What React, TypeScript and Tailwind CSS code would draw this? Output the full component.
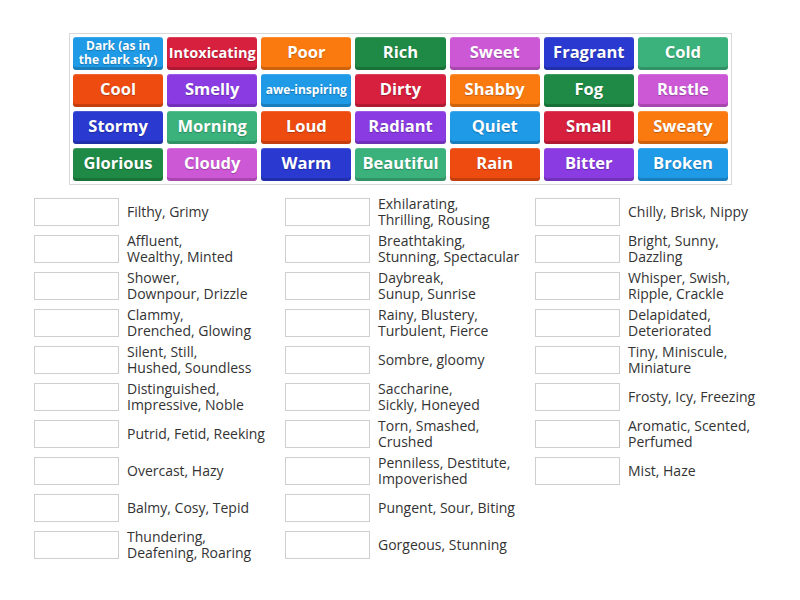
const palette = {
  blue: "bg-[#1f9ae6]",
  red: "bg-[#d6203e]",
  orange: "bg-[#fb7a10]",
  green: "bg-[#1f8a45]",
  pink: "bg-[#cd58d6]",
  navy: "bg-[#2a3ad0]",
  teal: "bg-[#3bb27c]",
  flame: "bg-[#ee4b10]",
  purple: "bg-[#8a3ce2]",
};

type Tile = { word: string; color: keyof typeof palette; size?: string };

const tiles: Tile[] = [
  { word: "Dark (as in the dark sky)", color: "blue", size: "text-[12px] leading-[14px]" },
  { word: "Intoxicating", color: "red", size: "text-[14.5px] whitespace-nowrap" },
  { word: "Poor", color: "orange" },
  { word: "Rich", color: "green" },
  { word: "Sweet", color: "pink" },
  { word: "Fragrant", color: "navy" },
  { word: "Cold", color: "teal" },
  { word: "Cool", color: "flame" },
  { word: "Smelly", color: "purple" },
  { word: "awe-inspiring", color: "blue", size: "text-[12px] whitespace-nowrap" },
  { word: "Dirty", color: "red" },
  { word: "Shabby", color: "orange" },
  { word: "Fog", color: "green" },
  { word: "Rustle", color: "pink" },
  { word: "Stormy", color: "navy" },
  { word: "Morning", color: "teal" },
  { word: "Loud", color: "flame" },
  { word: "Radiant", color: "purple" },
  { word: "Quiet", color: "blue" },
  { word: "Small", color: "red" },
  { word: "Sweaty", color: "orange" },
  { word: "Glorious", color: "green" },
  { word: "Cloudy", color: "pink" },
  { word: "Warm", color: "navy" },
  { word: "Beautiful", color: "teal" },
  { word: "Rain", color: "flame" },
  { word: "Bitter", color: "purple" },
  { word: "Broken", color: "blue" },
];

const columns: string[][][] = [
  [
    ["Filthy, Grimy"],
    ["Affluent,", "Wealthy, Minted"],
    ["Shower,", "Downpour, Drizzle"],
    ["Clammy,", "Drenched, Glowing"],
    ["Silent, Still,", "Hushed, Soundless"],
    ["Distinguished,", "Impressive, Noble"],
    ["Putrid, Fetid, Reeking"],
    ["Overcast, Hazy"],
    ["Balmy, Cosy, Tepid"],
    ["Thundering,", "Deafening, Roaring"],
  ],
  [
    ["Exhilarating,", "Thrilling, Rousing"],
    ["Breathtaking,", "Stunning, Spectacular"],
    ["Daybreak,", "Sunup, Sunrise"],
    ["Rainy, Blustery,", "Turbulent, Fierce"],
    ["Sombre, gloomy"],
    ["Saccharine,", "Sickly, Honeyed"],
    ["Torn, Smashed,", "Crushed"],
    ["Penniless, Destitute,", "Impoverished"],
    ["Pungent, Sour, Biting"],
    ["Gorgeous, Stunning"],
  ],
  [
    ["Chilly, Brisk, Nippy"],
    ["Bright, Sunny,", "Dazzling"],
    ["Whisper, Swish,", "Ripple, Crackle"],
    ["Delapidated,", "Deteriorated"],
    ["Tiny, Miniscule,", "Miniature"],
    ["Frosty, Icy, Freezing"],
    ["Aromatic, Scented,", "Perfumed"],
    ["Mist, Haze"],
  ],
];

function WordTile({ tile }: { tile: Tile }) {
  return (
    <div
      className={`${palette[tile.color]} h-[33px] rounded-[3px] flex items-center justify-center text-center text-white font-bold px-[2px] pb-[2px] shadow-[inset_0_-3px_0_rgba(0,0,0,0.18),inset_0_1px_0_rgba(255,255,255,0.15)] [text-shadow:0_1px_1px_rgba(0,0,0,0.25)] ${tile.size ?? "text-[16.5px]"}`}
    >
      {tile.word}
    </div>
  );
}

export default function App() {
  return (
    <div className="w-[800px] h-[600px] bg-white font-['Open_Sans',sans-serif] pt-[33px]">
      <div className="ml-[69px] w-[663px] border border-[#d8d8d8] p-[3px] grid grid-cols-7 gap-[4px]">
        {tiles.map((t) => (
          <WordTile key={t.word} tile={t} />
        ))}
      </div>

      <div className="mt-[13px] pl-[34px] grid grid-cols-[251px_250px_215px]">
        {columns.map((col, i) => (
          <div key={i} className="flex flex-col gap-[9px]">
            {col.map((lines) => (
              <div key={lines.join(" ")} className="flex items-center gap-[8px] h-[28px]">
                <div className="w-[85px] h-[28px] border border-[#cfcfcf] bg-white shrink-0" />
                <div className="text-[14px] leading-[16px] text-[#333] whitespace-nowrap">
                  {lines.map((l) => (
                    <div key={l}>{l}</div>
                  ))}
                </div>
              </div>
            ))}
          </div>
        ))}
      </div>
    </div>
  );
}
